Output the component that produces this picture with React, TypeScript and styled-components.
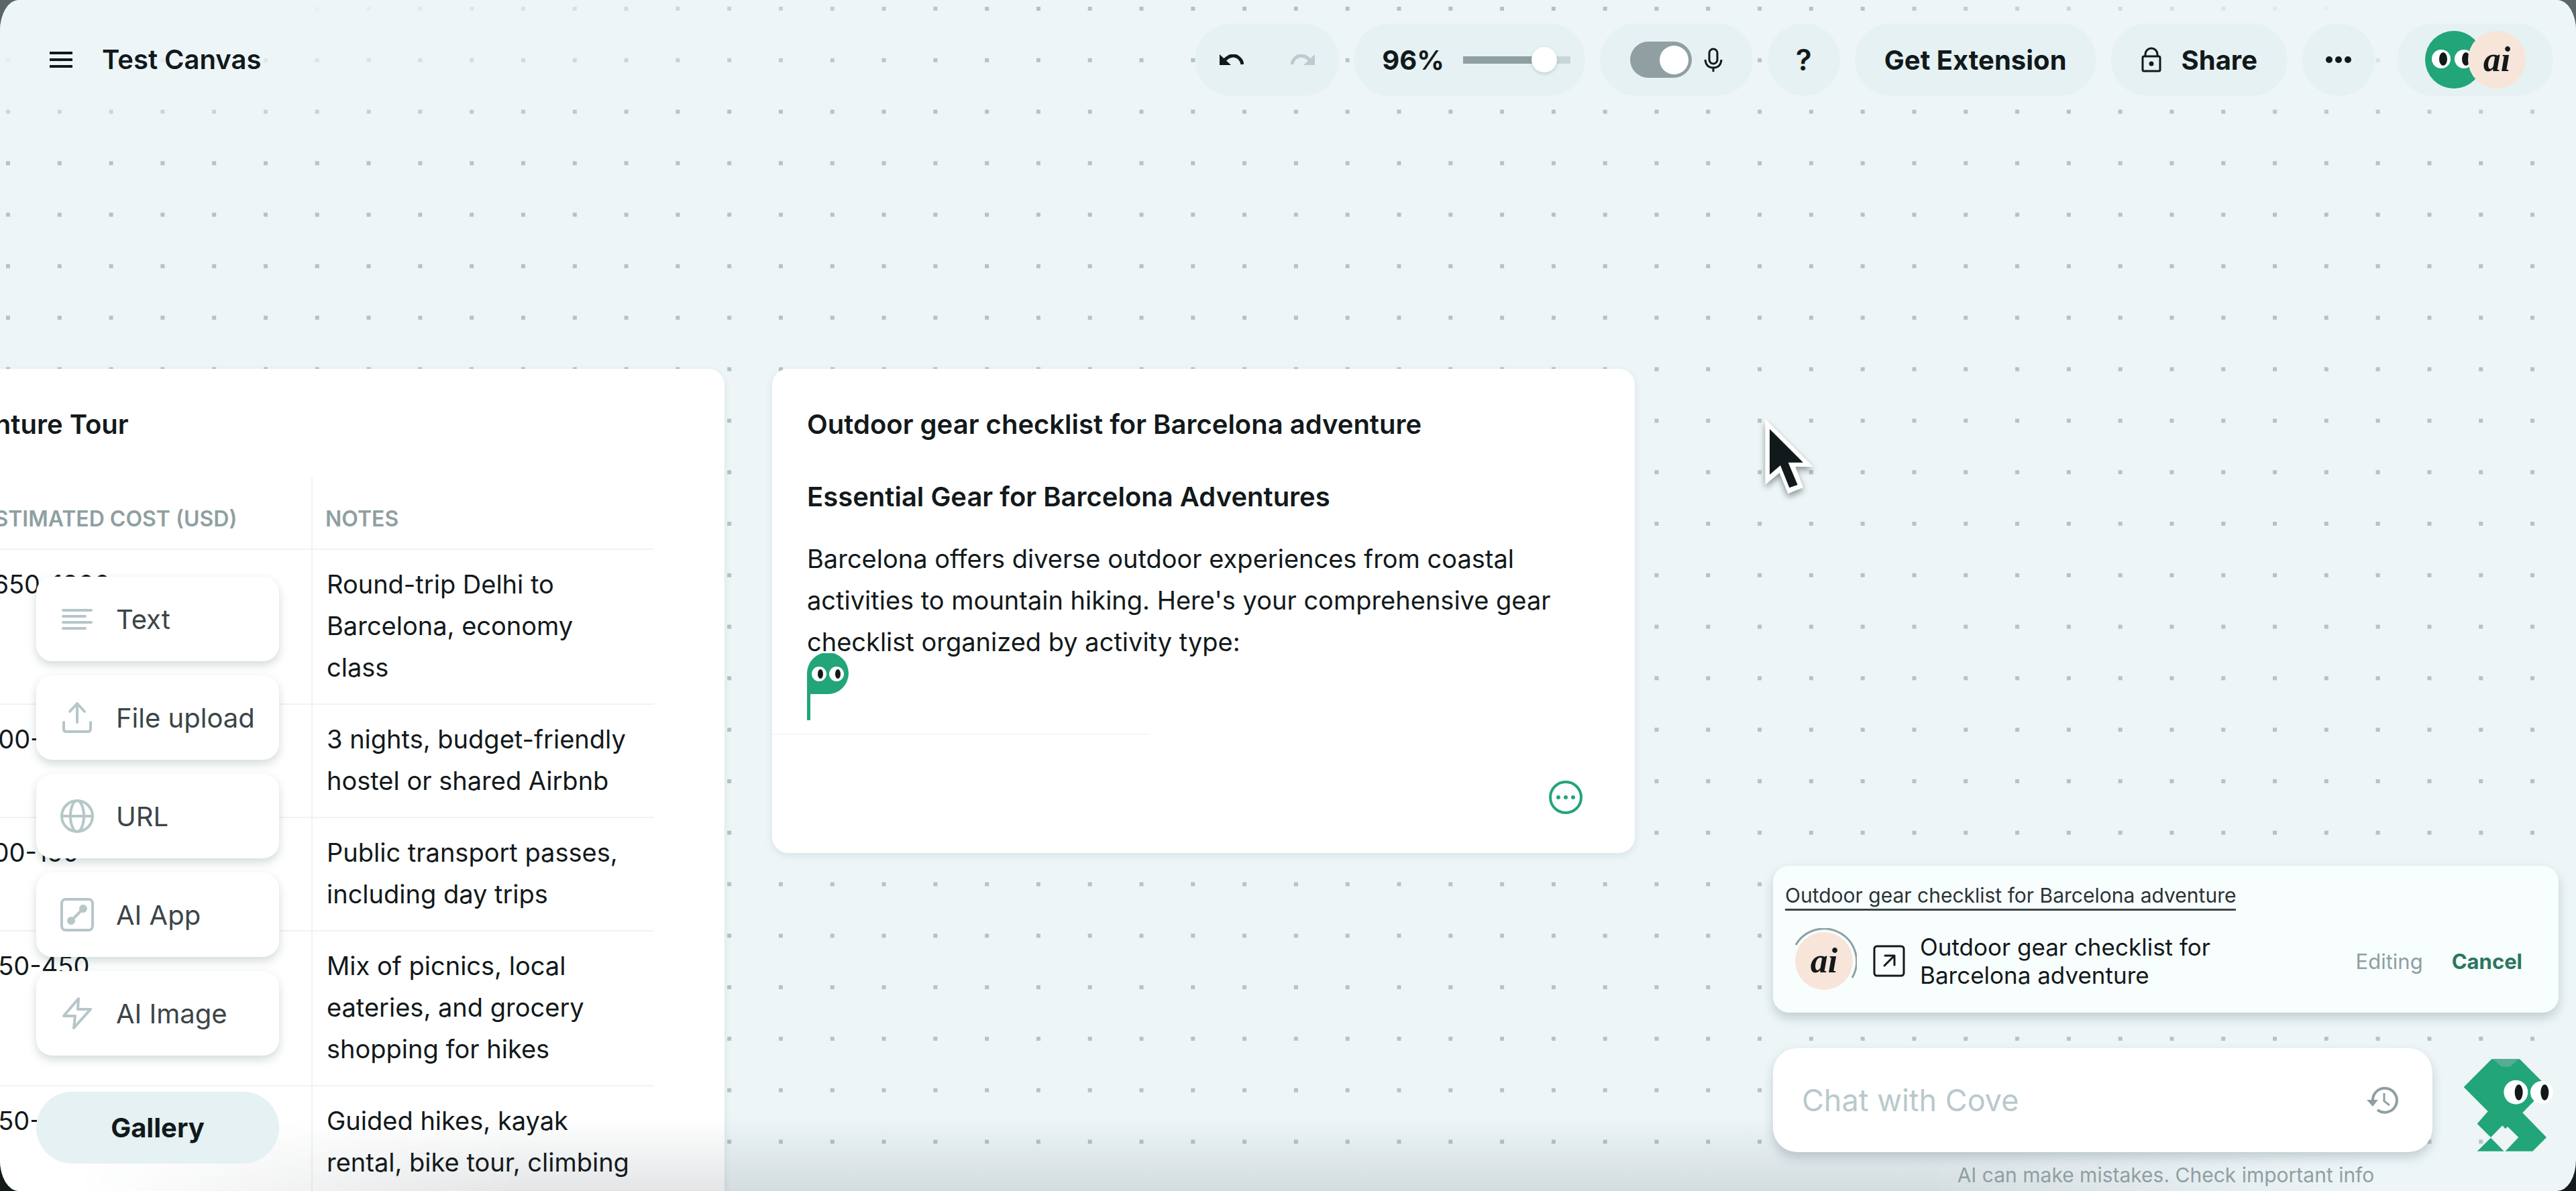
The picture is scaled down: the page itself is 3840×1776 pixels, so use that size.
import React from 'react';
import styled, { createGlobalStyle } from 'styled-components';

const sans = `Inter, "Liberation Sans", Arial, sans-serif`;
const ink = '#12191b';
const muted = '#8f9fa2';
const green = '#22a578';
const surface = '#edf5f7';
const pill = '#e6f1f3';

const GlobalStyle = createGlobalStyle`
  *, *::before, *::after { box-sizing: border-box; }
  body {
    margin: 0;
    font-family: ${sans};
    color: ${ink};
    background: linear-gradient(to bottom, #5d6666, #39424a 50%, #14191b);
  }
  button, input { font: inherit; color: inherit; }
  button { border: 0; padding: 0; background: none; cursor: pointer; }
  h1, h2, p { margin: 0; }
  svg { display: block; flex: none; }
`;

const Screen = styled.div`
  position: relative;
  display: flex;
  flex-direction: column;
  min-height: 100vh;
  overflow: hidden;
  border-radius: 28px / 46px;
  background: ${surface};
`;

/* Canvas: an 80px dot grid drawn at the current zoom level */
const Canvas = styled.main`
  --cell: calc(80px * 0.96);
  position: absolute;
  inset: 0;
  background-image: conic-gradient(from 270deg at 6px 6px, #b4c3c6 90deg, transparent 90deg);
  background-position: 9px 10px;
  background-size: var(--cell) var(--cell);

  &::before {
    content: '';
    position: absolute;
    inset: 0 0 auto;
    height: 250px;
    background:
      radial-gradient(ellipse 1500px 240px at 0 0, ${surface} 25%, transparent),
      radial-gradient(ellipse 1100px 200px at 100% 0, ${surface} 25%, transparent);
  }
`;

const Node = styled.article<{ $x: number; $y: number; $w: number }>`
  position: absolute;
  left: ${p => p.$x}px;
  top: ${p => p.$y}px;
  width: ${p => p.$w}px;
  padding: 52px;
  border-radius: 24px;
  background: #fff;
  box-shadow: 0 4px 12px rgba(40, 70, 80, 0.1);
`;

const NodeTitle = styled.h2`
  font-size: 40px;
  line-height: 62px;
  font-weight: 600;
`;

const Table = styled.table`
  width: 1022px;
  margin: 48px 53px 0 auto;
  border-spacing: 0;
  table-layout: fixed;
  text-align: left;
`;

const Th = styled.th`
  height: 108px;
  padding: 16px 19px 0;
  border-bottom: 2px solid #eff3f4;
  color: ${muted};
  font-size: 32px;
  font-weight: 600;
  white-space: nowrap;
  & + & { border-left: 2px solid #eff3f4; }
`;

const Td = styled.td`
  padding: 20px 21px 23px;
  border-bottom: 2px solid #eff3f4;
  font-size: 38px;
  line-height: 62px;
  vertical-align: top;
  & + & { border-left: 2px solid #eff3f4; }
`;

const Document = styled.div`
  display: flex;
  flex-direction: column;
  min-height: 618px;
`;

const Subhead = styled(NodeTitle)`
  margin-top: 46px;
  margin-bottom: 30px;
`;

const Paragraph = styled.p`
  font-size: 38px;
  line-height: 62px;
`;

const Flag = styled.div`
  position: relative;
  margin-top: -14px;
`;

const Divider = styled.hr`
  width: 562px;
  height: 2px;
  margin: 20px 0 0 -52px;
  border: 0;
  background: #f4f6f7;
`;

const Status = styled.div`
  display: flex;
  justify-content: flex-end;
  margin-top: 68px;
  padding-right: 26px;
`;

const Pointer = styled.div`
  position: absolute;
  left: 2630px;
  top: 623px;
  filter: drop-shadow(0 5px 5px rgba(20, 30, 35, 0.45));
`;

const Header = styled.header`
  position: relative;
  display: flex;
  align-items: center;
  gap: 22px;
  padding: 35px 34px 0 74px;
`;

const MenuButton = styled.button`
  display: flex;
  margin-right: 22px;
`;

const CanvasTitle = styled.h1`
  flex: 1;
  font-size: 40px;
  line-height: 62px;
  font-weight: 600;
`;

const Pill = styled.div<{ $pad?: number; $gap?: number }>`
  display: flex;
  align-items: center;
  justify-content: center;
  gap: ${p => p.$gap ?? 0}px;
  height: 108px;
  min-width: 108px;
  padding: 0 ${p => p.$pad ?? 0}px;
  border-radius: 54px;
  background: ${pill};
  font-size: 40px;
  font-weight: 700;
  white-space: nowrap;
`;

const ZoomPill = styled(Pill)`
  padding: 0 22px 0 42px;
`;

const People = styled(Pill)`
  margin-left: 12px;
`;

const HelpMark = styled.span`
  font-size: 44px;
  font-weight: 600;
`;

const Zoom = styled.input`
  appearance: none;
  width: 160px;
  height: 38px;
  margin: 0;
  background: linear-gradient(to right, ${muted} 78%, #c9d6d8 78%) center / 100% 11px no-repeat;
  clip-path: inset(-12px 0 round 6px);
  &::-webkit-slider-thumb {
    appearance: none;
    width: 38px;
    height: 38px;
    border-radius: 50%;
    background: #fff;
    box-shadow: 0 2px 5px rgba(40, 60, 70, 0.2);
  }
`;

const Toggle = styled.input`
  appearance: none;
  display: flex;
  align-items: center;
  justify-content: flex-end;
  width: 92px;
  height: 54px;
  margin: 0;
  padding: 5px;
  border-radius: 27px;
  background: ${muted};
  &::after {
    content: '';
    width: 43px;
    height: 43px;
    border-radius: 50%;
    background: #fff;
  }
`;

const AiBadge = styled.span<{ $overlap?: boolean }>`
  position: relative;
  display: flex;
  align-items: center;
  justify-content: center;
  width: 86px;
  height: 86px;
  margin-left: ${p => (p.$overlap ? -22 : 0)}px;
  border-radius: 50%;
  background: #f8e5da;
  font: italic 700 52px/60px "Liberation Serif", "Times New Roman", serif;
`;

const Dock = styled.div`
  position: relative;
  flex: 1;
  display: flex;
  align-items: flex-end;
  justify-content: space-between;
  padding: 0 26px 0 54px;
  pointer-events: none;
  & > * { pointer-events: auto; }
`;

const BottomShade = styled.div`
  position: absolute;
  inset: auto 0 0;
  height: 110px;
  background: linear-gradient(to top, rgba(40, 55, 65, 0.13), transparent);
  mask-image: linear-gradient(to right, transparent 3%, #000 20%, #000 75%, transparent 92%);
`;

const Tools = styled.nav`
  display: flex;
  flex-direction: column;
  gap: 21px;
  width: 362px;
  padding-bottom: 41px;
`;

const ToolButton = styled.button`
  display: flex;
  align-items: center;
  gap: 33px;
  height: 126px;
  padding-left: 36px;
  border-radius: 24px;
  background: #fff;
  box-shadow: 0 6px 14px rgba(40, 70, 80, 0.2);
  color: #3b4548;
  font-size: 40px;
  white-space: nowrap;
  & svg { color: #b6c6c9; }
`;

const GalleryButton = styled.button`
  height: 107px;
  margin-top: 33px;
  border-radius: 54px;
  background: #e5f1f3;
  font-size: 40px;
  font-weight: 700;
`;

const Assistant = styled.aside`
  display: flex;
  flex-direction: column;
  width: 1171px;
`;

const TaskCard = styled.section`
  display: flex;
  flex-direction: column;
  align-items: flex-start;
  height: 219px;
  padding: 24px 18px 0;
  border-radius: 24px;
  background: #f8fdfd;
  box-shadow: 0 8px 16px rgba(40, 70, 80, 0.22);
`;

const TaskLink = styled.a`
  border-bottom: 3px solid #3b4548;
  color: #2a3336;
  font-size: 30px;
  line-height: 40px;
  text-decoration: none;
`;

const TaskRow = styled.div`
  display: flex;
  align-items: center;
  align-self: stretch;
  height: 98px;
  margin-top: 26px;
  padding: 0 36px 0 9px;
`;

const Spinner = styled.div`
  position: relative;
  display: flex;
  align-items: center;
  justify-content: center;
  width: 98px;
  height: 98px;
  margin-right: 24px;
  & > svg { position: absolute; inset: 0; }
`;

const TaskName = styled.p`
  flex: 1;
  max-width: 460px;
  margin: 0 auto 0 22px;
  font-size: 35px;
  line-height: 42px;
`;

const TaskState = styled.span`
  margin-right: 43px;
  color: ${muted};
  font-size: 31px;
`;

const CancelButton = styled.button`
  color: #2b7660;
  font-size: 31px;
  font-weight: 700;
`;

const ChatRow = styled.form`
  display: flex;
  align-items: flex-end;
  gap: 46px;
  margin-top: 53px;
  padding-right: 8px;
`;

const ChatBox = styled.div`
  display: flex;
  align-items: center;
  flex: 1;
  height: 155px;
  padding: 0 50px 0 43px;
  border-radius: 36px;
  background: #fff;
  box-shadow: 0 8px 16px rgba(40, 70, 80, 0.22);
`;

const ChatInput = styled.input`
  flex: 1;
  min-width: 0;
  border: 0;
  padding: 0;
  outline: 0;
  background: none;
  font-size: 45px;
  line-height: 60px;
  &::placeholder { color: #b9c9cc; opacity: 1; }
`;

const Notice = styled.p`
  padding: 12px 0 2px;
  color: ${muted};
  font-size: 30px;
  line-height: 44px;
  text-align: center;
`;

const rows = [
  ['1650-1800', 'Round-trip Delhi to Barcelona, economy class'],
  ['200-300', '3 nights, budget-friendly hostel or shared Airbnb'],
  ['100-150', 'Public transport passes, including day trips'],
  ['250-450', 'Mix of picnics, local eateries, and grocery shopping for hikes'],
  ['250-400', 'Guided hikes, kayak rental, bike tour, climbing'],
];

const line = { fill: 'none', stroke: 'currentColor', strokeLinecap: 'round', strokeLinejoin: 'round' } as const;

const TextIcon = () => (
  <svg width="50" height="50" viewBox="0 0 50 50" {...line} strokeWidth="4">
    <path d="M4 12h42M4 21h33M4 30h42M4 39h33" />
  </svg>
);
const UploadIcon = () => (
  <svg width="50" height="50" viewBox="0 0 50 50" {...line} strokeWidth="4">
    <path d="M25 32V5M14 16L25 4l11 12M5 32v10q0 4 4 4h32q4 0 4-4V32" />
  </svg>
);
const GlobeIcon = () => (
  <svg width="50" height="50" viewBox="0 0 50 50" {...line} strokeWidth="4">
    <circle cx="25" cy="25" r="23" />
    <ellipse cx="25" cy="25" rx="10" ry="23" />
    <path d="M2 25h46" />
  </svg>
);
const AppIcon = () => (
  <svg width="50" height="50" viewBox="0 0 50 50" {...line} strokeWidth="4">
    <rect x="2" y="2" width="46" height="46" rx="6" />
    <path d="M16 34L34 16" />
    <circle cx="16" cy="34" r="4" fill="currentColor" />
    <circle cx="34" cy="16" r="4" fill="currentColor" />
  </svg>
);
const BoltIcon = () => (
  <svg width="50" height="50" viewBox="0 0 50 50" {...line} strokeWidth="4">
    <path d="M27 3L5 29h17l-2 18 25-28H26z" />
  </svg>
);

const tools = [
  { label: 'Text', Icon: TextIcon },
  { label: 'File upload', Icon: UploadIcon },
  { label: 'URL', Icon: GlobeIcon },
  { label: 'AI App', Icon: AppIcon },
  { label: 'AI Image', Icon: BoltIcon },
];

const UndoArrow = ({ flip = false, color = ink }) => (
  <svg width="36" height="16" viewBox="0 0 36 16" color={color}>
    <g transform={flip ? 'translate(36 0) scale(-1 1)' : undefined}>
      <path d="M0 0v16h17z" fill="currentColor" />
      <path d="M7 9Q18-2 27 4q6 4 7 11" fill="none" stroke="currentColor" strokeWidth="5" />
    </g>
  </svg>
);

const CoveAvatar = () => (
  <svg width="86" height="86" viewBox="0 0 86 86">
    <circle cx="43" cy="43" r="43" fill={green} />
    <circle cx="24" cy="42" r="14" fill="#fff" />
    <ellipse cx="27" cy="42" rx="6" ry="10" fill={ink} />
    <circle cx="58" cy="42" r="14" fill="#fff" />
    <ellipse cx="61" cy="42" rx="6" ry="10" fill={ink} />
  </svg>
);

const Mascot = () => (
  <svg width="134" height="143" viewBox="160 75 402 429">
    <path
      d="M287 88H412L537 213 425 328 532 438 470 500H348L407 438 358 390 348 400 335 385 283 438 222 377 270 322 162 213zM283 440L342 500H222z"
      fill={green}
    />
    <path d="M293 88H406L370 122H330z" fill="#56ad92" />
    <circle cx="395" cy="236" r="54" fill="#fff" />
    <circle cx="511" cy="237" r="51" fill="#fff" />
    <ellipse cx="408" cy="237" rx="18" ry="35" fill={ink} />
    <ellipse cx="524" cy="237" rx="18" ry="35" fill={ink} />
  </svg>
);

export default function App() {
  return (
    <>
      <GlobalStyle />
      <Screen>
        <Canvas>
          <Node $x={-364} $y={550} $w={1444}>
            <NodeTitle>Barcelona Adventure Tour</NodeTitle>
            <Table>
              <thead>
                <tr>
                  <Th>ESTIMATED COST (USD)</Th>
                  <Th>NOTES</Th>
                </tr>
              </thead>
              <tbody>
                {rows.map(([cost, notes]) => (
                  <tr key={notes}>
                    <Td>{cost}</Td>
                    <Td>{notes}</Td>
                  </tr>
                ))}
              </tbody>
            </Table>
          </Node>

          <Node $x={1151} $y={550} $w={1286}>
            <Document>
              <NodeTitle>Outdoor gear checklist for Barcelona adventure</NodeTitle>
              <Subhead>Essential Gear for Barcelona Adventures</Subhead>
              <Paragraph>
                Barcelona offers diverse outdoor experiences from coastal activities to mountain
                hiking. Here's your comprehensive gear checklist organized by activity type:
              </Paragraph>
              <Flag>
                <svg width="62" height="100" viewBox="0 0 62 100">
                  <path d="M0 30a31 31 0 1 1 31 31H5V100H0z" fill={green} />
                  <circle cx="18" cy="31" r="11" fill="#fff" />
                  <circle cx="44" cy="31" r="11" fill="#fff" />
                  <ellipse cx="20" cy="31" rx="4" ry="7" fill={ink} />
                  <ellipse cx="46" cy="31" rx="4" ry="7" fill={ink} />
                </svg>
              </Flag>
              <Divider />
              <Status>
                <svg width="50" height="50" viewBox="0 0 50 50" fill={green}>
                  <circle cx="25" cy="25" r="23" fill="none" stroke={green} strokeWidth="4" />
                  <circle cx="14" cy="25" r="3" />
                  <circle cx="25" cy="25" r="3" />
                  <circle cx="36" cy="25" r="3" />
                </svg>
              </Status>
            </Document>
          </Node>

          <Pointer>
            <svg width="74" height="115" viewBox="88 70 222 345">
              <path d="M92 75L307 289H227L262 381 194 410 156 316 92 370z" fill="#fff" />
              <path d="M112 120L262 270H195L237 370 200 383 160 283 112 324z" fill={ink} />
            </svg>
          </Pointer>
        </Canvas>

        <BottomShade />

        <Header>
          <MenuButton aria-label="Menu">
            <svg width="34" height="28" viewBox="0 0 34 28" stroke={ink} strokeWidth="4">
              <path d="M0 4h34M0 14h34M0 24h34" />
            </svg>
          </MenuButton>
          <CanvasTitle>Test Canvas</CanvasTitle>
          <Pill $pad={36} $gap={70}>
            <button aria-label="Undo"><UndoArrow /></button>
            <button aria-label="Redo" disabled><UndoArrow flip color="#bccbce" /></button>
          </Pill>
          <ZoomPill as="label" $gap={28}>
            96%
            <Zoom type="range" min={0} max={100} defaultValue={84} />
          </ZoomPill>
          <Pill as="label" $pad={45} $gap={18}>
            <Toggle type="checkbox" defaultChecked aria-label="Voice input" />
            <svg width="28" height="36" viewBox="0 0 28 36" fill="none" stroke={ink} strokeWidth="3">
              <rect x="8" y="2" width="12" height="22" rx="6" />
              <path d="M2 18q1 12 12 12t12-12M14 30v6" />
            </svg>
          </Pill>
          <Pill as="button" aria-label="Help"><HelpMark>?</HelpMark></Pill>
          <Pill as="button" $pad={44}>Get Extension</Pill>
          <Pill as="button" $pad={45} $gap={30}>
            <svg width="30" height="38" viewBox="0 0 30 38" fill="none" stroke={ink} strokeWidth="3">
              <rect x="2" y="14" width="26" height="22" rx="2" />
              <path d="M6 14V11a9 9 0 0 1 18 0v3" />
              <circle cx="15" cy="25" r="2" fill={ink} />
            </svg>
            Share
          </Pill>
          <Pill as="button" aria-label="More">
            <svg width="38" height="10" viewBox="0 0 38 10" fill={ink}>
              <circle cx="5" cy="5" r="5" />
              <circle cx="19" cy="5" r="5" />
              <circle cx="33" cy="5" r="5" />
            </svg>
          </Pill>
          <People $pad={41}>
            <CoveAvatar />
            <AiBadge $overlap>ai</AiBadge>
          </People>
        </Header>

        <Dock>
          <Tools>
            {tools.map(({ label, Icon }) => (
              <ToolButton key={label}>
                <Icon />
                {label}
              </ToolButton>
            ))}
            <GalleryButton>Gallery</GalleryButton>
          </Tools>

          <Assistant>
            <TaskCard>
              <TaskLink href="#gear">Outdoor gear checklist for Barcelona adventure</TaskLink>
              <TaskRow>
                <Spinner>
                  <svg width="98" height="98" viewBox="0 0 98 98" fill="none" stroke={muted} strokeWidth="3">
                    <path d="M7 25A48 48 0 1 1 91 74" />
                  </svg>
                  <AiBadge>ai</AiBadge>
                </Spinner>
                <svg width="48" height="48" viewBox="0 0 48 48" {...line} strokeWidth="3">
                  <rect x="2" y="2" width="44" height="44" rx="4" />
                  <path d="M17 31L32 16M18 16H32V30" />
                </svg>
                <TaskName>Outdoor gear checklist for Barcelona adventure</TaskName>
                <TaskState>Editing</TaskState>
                <CancelButton>Cancel</CancelButton>
              </TaskRow>
            </TaskCard>
            <ChatRow>
              <ChatBox>
                <ChatInput placeholder="Chat with Cove" aria-label="Chat with Cove" />
                <button type="button" aria-label="History">
                  <svg width="48" height="42" viewBox="0 0 48 42" fill="none" stroke={muted} strokeWidth="4">
                    <path d="M9 22A18 18 0 1 1 16 35" />
                    <path d="M26 10V22L34 28" strokeWidth="3" />
                    <path d="M0 20H17L9 30z" fill={muted} stroke="none" />
                  </svg>
                </button>
              </ChatBox>
              <Mascot />
            </ChatRow>
            <Notice>AI can make mistakes. Check important info</Notice>
          </Assistant>
        </Dock>
      </Screen>
    </>
  );
}
